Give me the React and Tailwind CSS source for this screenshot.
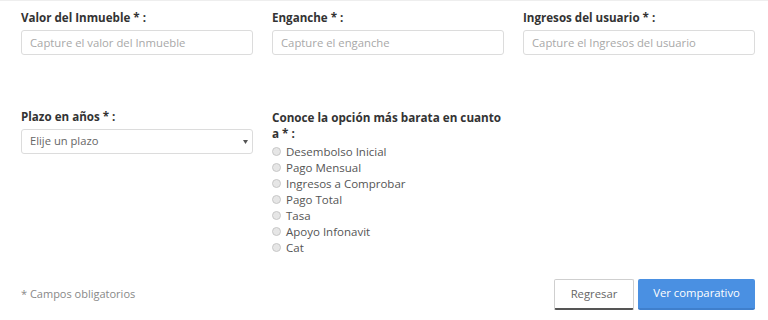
import React from "react";

const font = { fontFamily: '"Open Sans", sans-serif' };

function Field({ label, placeholder }) {
  return (
    <div className="flex flex-col">
      <label className="text-[11.6px] font-bold text-[#333] leading-[16px] mb-[4px]">{label}</label>
      <input
        className="h-[25px] w-full rounded-[3px] border border-[#dcdcdc] px-[8px] text-[11.3px] text-[#555] placeholder:text-[#a8a8a8] outline-none"
        placeholder={placeholder}
      />
    </div>
  );
}

export default function App() {
  const options = [
    "Desembolso Inicial",
    "Pago Mensual",
    "Ingresos a Comprobar",
    "Pago Total",
    "Tasa",
    "Apoyo Infonavit",
    "Cat",
  ];
  return (
    <div style={font} className="w-[768px] h-[320px] bg-white border-t border-[#eeeeee] pl-[21px] pr-[13px] pt-[9px] text-[#333]">
      <div className="grid grid-cols-3 gap-x-[19px]">
        <Field label="Valor del Inmueble * :" placeholder="Capture el valor del Inmueble" />
        <Field label="Enganche * :" placeholder="Capture el enganche" />
        <Field label="Ingresos del usuario * :" placeholder="Capture el Ingresos del usuario" />
      </div>
      <div className="grid grid-cols-3 gap-x-[19px] mt-[54px]">
        <div className="flex flex-col">
          <label className="text-[11.6px] font-bold text-[#333] leading-[16px] mb-[4px]">Plazo en años * :</label>
          <div className="relative h-[25px] w-full rounded-[3px] border border-[#dcdcdc] flex items-center px-[8px]">
            <span className="text-[11.2px] text-[#666]">Elije un plazo</span>
            <svg className="absolute right-[4px] top-[10px]" width="5" height="4" viewBox="0 0 5 4">
              <path d="M0 0 L5 0 L2.5 4 Z" fill="#555" />
            </svg>
          </div>
        </div>
        <div className="flex flex-col">
          <label className="text-[11.7px] font-bold text-[#333] leading-[16px] whitespace-nowrap">
            Conoce la opción más barata en cuanto
            <br />
            a * :
          </label>
          <div className="flex flex-col mt-[3px]">
            {options.map((o) => (
              <label key={o} className="flex items-center h-[16px] text-[11.5px] text-[#555]">
                <span className="inline-block w-[9px] h-[9px] rounded-full border border-[#c8c8c8] bg-[#e6e6e6] mr-[5px] mb-[2px]"></span>
                {o}
              </label>
            ))}
          </div>
        </div>
        <div></div>
      </div>
      <div className="flex items-center justify-between mt-[23px]">
        <span className="text-[11px] text-[#888]">* Campos obligatorios</span>
        <div className="flex gap-[4px]">
          <button className="w-[80px] h-[31px] rounded-[2px] border border-[#cfcfcf] border-b-[2px] border-b-[#555] bg-white text-[11.3px] text-[#666]">Regresar</button>
          <button className="w-[117px] h-[31px] rounded-[2px] bg-[#4a90e2] border-b-[2px] border-b-[#3f7fcc] text-[11.3px] text-white">Ver comparativo</button>
        </div>
      </div>
    </div>
  );
}
